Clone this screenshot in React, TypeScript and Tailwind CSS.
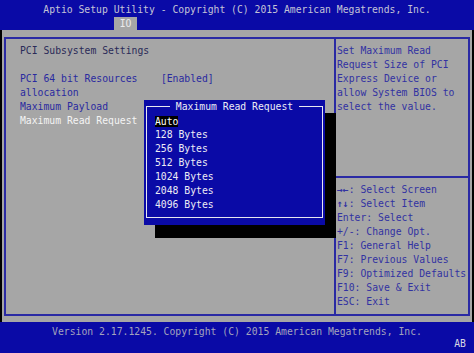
const mono = { fontFamily: '"DejaVu Sans Mono", "Liberation Mono", monospace' }

const keyHelp: [string, string][] = [
  ["→←", ": Select Screen"],
  ["↑↓", ": Select Item"],
  ["", "Enter: Select"],
  ["", "+/-: Change Opt."],
  ["", "F1: General Help"],
  ["", "F7: Previous Values"],
  ["", "F9: Optimized Defaults"],
  ["", "F10: Save & Exit"],
  ["", "ESC: Exit"],
]

const options = ["Auto", "128 Bytes", "256 Bytes", "512 Bytes", "1024 Bytes", "2048 Bytes", "4096 Bytes"]

const App = () => {
  return (
    <div
      className="relative flex flex-col w-[474px] h-[353px] bg-black overflow-hidden text-[9.75px] leading-[14px]"
      style={mono}
    >
      {/* header */}
      <div className="flex flex-col h-[30px] bg-[#0a0aa6]">
        <div className="h-[17px] pt-[3px] text-center text-[#c4c4d6] whitespace-pre">
          Aptio Setup Utility - Copyright (C) 2015 American Megatrends, Inc.
        </div>
        <div className="ml-[114px] w-[23px] h-[13px] bg-[#a6a6a6] text-[#ececec] text-center leading-[13px]">
          IO
        </div>
      </div>

      {/* body */}
      <div className="flex-1 mx-[2px] bg-[#a6a6a6] pt-[7px] pb-[6px] px-[2px]">
        <div className="flex h-full border-2 border-[#2a2aa4]">
          <div className="w-[328px] pl-[14px] pt-[5px] whitespace-pre">
            <div className="text-[#2a2a58]">PCI Subsystem Settings</div>
            <div className="h-[14px]" />
            <div className="text-[#2a2aa0]">PCI 64 bit Resources    [Enabled]</div>
            <div className="text-[#2a2aa0]">allocation</div>
            <div className="text-[#2a2aa0]">Maximum Payload</div>
            <div className="text-[#f4f4f4]">Maximum Read Request</div>
          </div>
          <div className="flex flex-col flex-1 border-l-2 border-[#2a2aa4] whitespace-pre text-[#3232a2]">
            <div className="h-[137px] pl-[1px] pt-[5px]">
              <div>Set Maximum Read</div>
              <div>Request Size of PCI</div>
              <div>Express Device or</div>
              <div>allow System BIOS to</div>
              <div>select the value.</div>
            </div>
            <div className="border-t-2 border-[#2a2aa4] pl-[1px] pt-[5px]">
              {keyHelp.map(([a, t]) => (
                <div key={t}>
                  {a && <span className="font-bold">{a}</span>}
                  {t}
                </div>
              ))}
            </div>
          </div>
        </div>
      </div>

      {/* footer */}
      <div className="relative h-[31px] bg-[#0a0aa6] text-[#a4a4bc]">
        <div className="pt-[3px] text-center whitespace-pre">
          Version 2.17.1245. Copyright (C) 2015 American Megatrends, Inc.
        </div>
        <div className="absolute right-[8px] top-[15px] text-[#d8d8e4]">AB</div>
      </div>

      {/* popup shadow */}
      <div className="absolute left-[155px] top-[113px] w-[181px] h-[125px] bg-black" />

      {/* popup */}
      <div className="absolute left-[144px] top-[100px] w-[181px] h-[125px] bg-[#0a0aa6] text-[#ececf4]">
        <div className="absolute left-[2px] right-[2px] top-[6px] bottom-[7px] border border-[#e6e6f0]" />
        <div className="absolute left-0 right-0 top-0 flex justify-center">
          <span className="bg-[#0a0aa6] px-[6px] leading-[13px] whitespace-pre">Maximum Read Request</span>
        </div>
        <div className="absolute left-[11px] top-[14px] whitespace-pre">
          {options.map((o, i) => (
            <div key={o} className="h-[14px] flex items-center">
              {i === 0 ? (
                <span className="bg-black text-white leading-[11px] h-[11px]">{o}</span>
              ) : (
                o
              )}
            </div>
          ))}
        </div>
      </div>
    </div>
  )
}

export default App
